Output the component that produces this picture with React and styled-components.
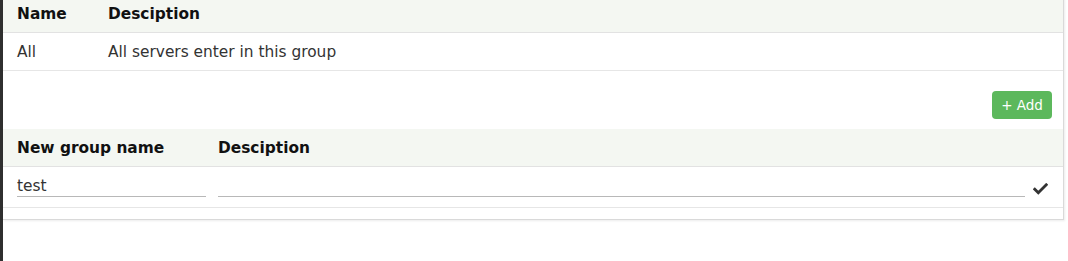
import React from 'react'
import styled, { createGlobalStyle } from 'styled-components'

const Global = createGlobalStyle`
  html, body { margin: 0; padding: 0; background: #fff; }
  body {
    font-family: "DejaVu Sans", "Liberation Sans", sans-serif;
    font-size: 15.4px;
    color: #333;
  }
`

const Page = styled.div`
  display: flex;
  height: 261px;
  overflow: hidden;
`

const SideEdge = styled.div`
  width: 3px;
  flex: none;
  background: #2f2f2f;
`

const Panel = styled.div`
  width: 1060px;
  margin-top: -5px;
  align-self: flex-start;
  border-right: 1px solid #d9d9d9;
  border-bottom: 1px solid #d9d9d9;
  box-shadow: 1px 1px 2px rgba(0, 0, 0, 0.08);
  padding-bottom: 11px;
`

const Table = styled.div`
  display: flex;
  flex-direction: column;
`

const HeadRow = styled.div`
  box-sizing: border-box;
  display: flex;
  align-items: center;
  height: ${p => p.$h}px;
  padding-left: 14px;
  background: #f4f7f2;
  border-bottom: 1px solid #e2e2e2;
  font-weight: bold;
  color: #111;
`

const Row = styled.div`
  box-sizing: border-box;
  display: flex;
  align-items: center;
  height: ${p => p.$h}px;
  padding-left: 14px;
  border-bottom: 1px solid #e6e6e6;
`

const Cell = styled.div`
  width: ${p => (p.$w ? `${p.$w}px` : 'auto')};
  flex: ${p => (p.$w ? 'none' : '1')};
`

const Toolbar = styled.div`
  display: flex;
  justify-content: flex-end;
  padding: 20px 11px 10px 0;
`

const AddButton = styled.button`
  height: 28px;
  width: 60px;
  padding: 0;
  border: none;
  border-radius: 4px;
  background: #5cb85c;
  color: #fff;
  font-family: "DejaVu Sans", "Liberation Sans", sans-serif;
  font-size: 13.5px;
`

const Input = styled.input`
  box-sizing: border-box;
  width: ${p => p.$w}px;
  height: 22px;
  padding: 0;
  border: none;
  border-bottom: 1px solid #b8b8b8;
  font-family: "DejaVu Sans", "Liberation Sans", sans-serif;
  font-size: 15.4px;
  color: #333;
  outline: none;
  background: transparent;
`

const InputRow = styled(Row)`
  align-items: flex-start;
  padding-top: 8px;
  gap: 12px;
`

const Check = styled.svg`
  width: 15px;
  height: 12px;
  margin-left: -4px;
  margin-top: 8px;
`

export default function App() {
  return (
    <Page>
      <Global />
      <SideEdge />
      <Panel>
        <Table>
          <HeadRow $h={38}>
            <Cell $w={91}>Name</Cell>
            <Cell>Desciption</Cell>
          </HeadRow>
          <Row $h={38}>
            <Cell $w={91}>All</Cell>
            <Cell>All servers enter in this group</Cell>
          </Row>
        </Table>
        <Toolbar>
          <AddButton>+ Add</AddButton>
        </Toolbar>
        <Table>
          <HeadRow $h={38}>
            <Cell $w={201}>New group name</Cell>
            <Cell>Desciption</Cell>
          </HeadRow>
          <InputRow $h={41}>
            <Input $w={189} defaultValue="test" />
            <Input $w={807} defaultValue="" />
            <Check viewBox="0 0 15 12">
              <path d="M1.8 6.2 L5.3 9.7 L13.2 1.8" fill="none" stroke="#333" strokeWidth="2.8" strokeLinecap="square" />
            </Check>
          </InputRow>
        </Table>
      </Panel>
    </Page>
  )
}
